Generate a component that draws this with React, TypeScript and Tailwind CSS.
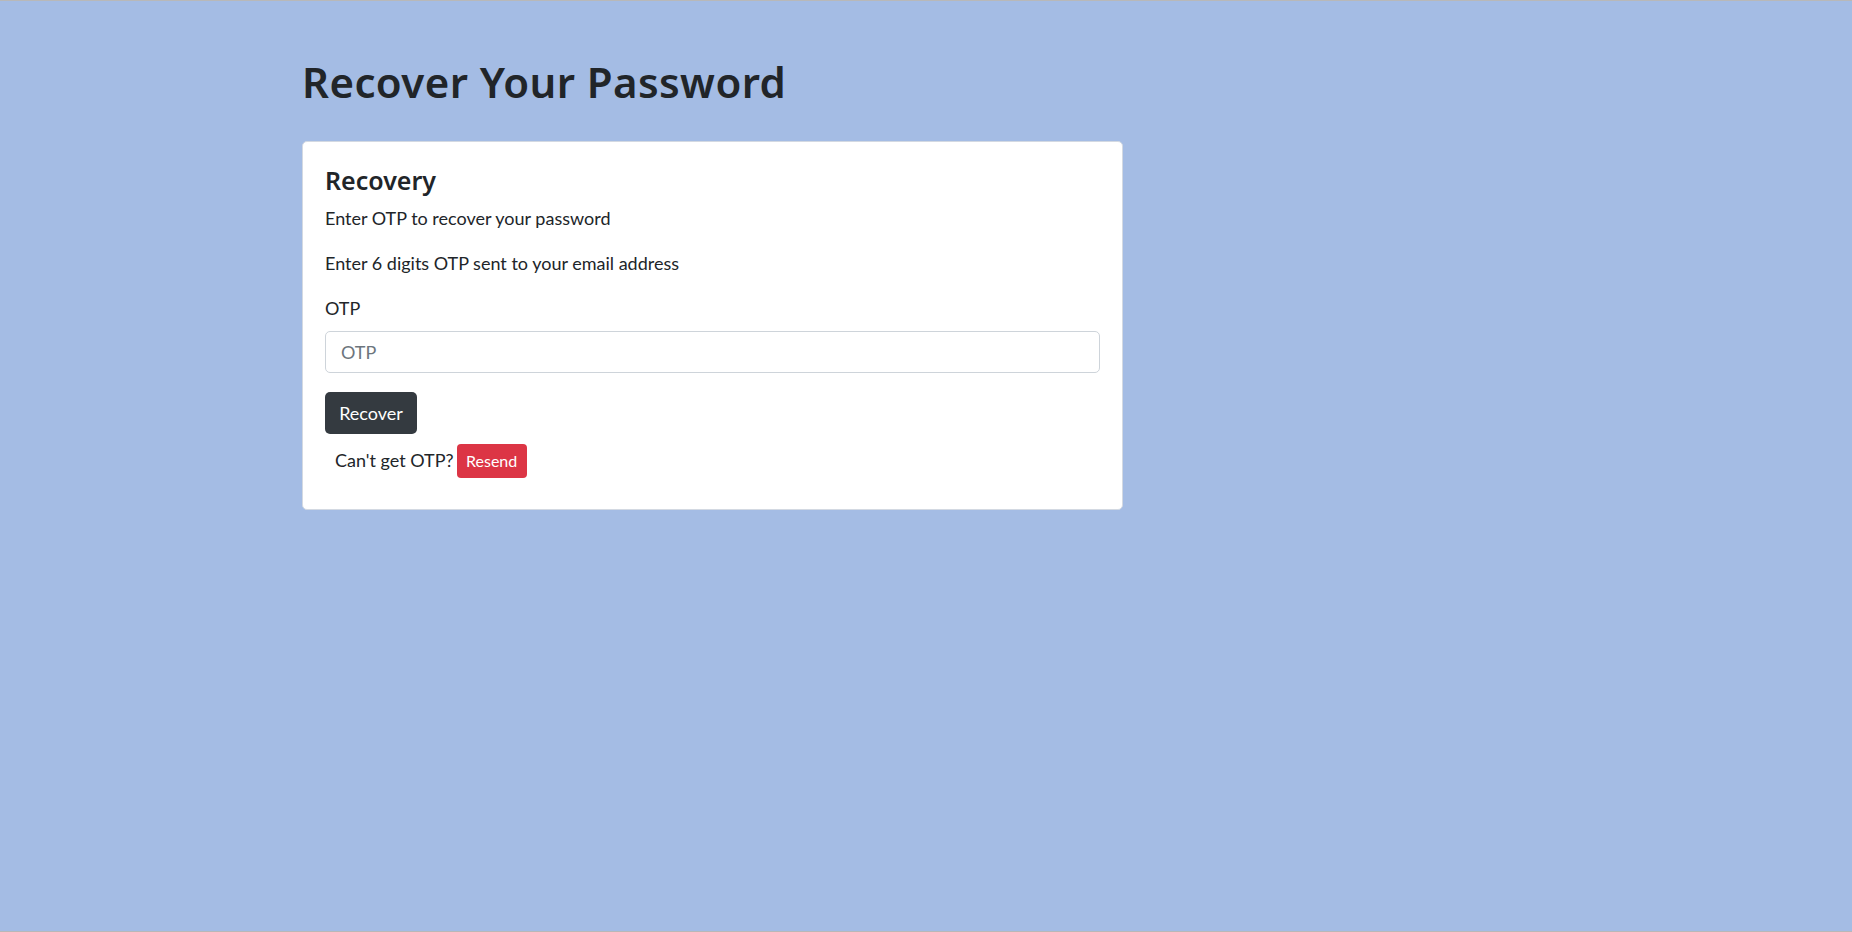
const bodyFont = { fontFamily: "Lato, 'Liberation Sans', sans-serif" };
const headFont = { fontFamily: "'Noto Sans', 'Open Sans', sans-serif" };

const App = () => {
  return (
    <div
      className="h-[932px] w-full bg-[#a4bce4] border-y border-[#b8b8b8] text-[#212529]"
      style={bodyFont}
    >
      <main className="pl-[302px]">
        <h1
          className="pt-[56px] text-[42px] leading-[50px] font-semibold tracking-[0.4px]"
          style={headFont}
        >
          Recover Your Password
        </h1>

        <section className="mt-[34px] w-[821px] bg-white border border-[#d3d9e2] rounded-[5px] px-[22px] pt-[23px] pb-[31px]">
          <h2 className="text-[25px] leading-[30px] font-semibold" style={headFont}>
            Recovery
          </h2>
          <p className="mt-[9px] text-[18px] leading-[28px]">
            Enter OTP to recover your password
          </p>
          <p className="mt-[17px] text-[18px] leading-[28px]">
            Enter 6 digits OTP sent to your email address
          </p>

          <form className="mt-[17px]" onSubmit={(e) => e.preventDefault()}>
            <label htmlFor="otp" className="block text-[18px] leading-[28px]">
              OTP
            </label>
            <input
              id="otp"
              type="text"
              placeholder="OTP"
              className="mt-[9px] block w-full h-[42px] px-[15px] text-[18px] border border-[#ced4da] rounded-[5px] placeholder:text-[#6c757d] outline-none"
              style={bodyFont}
            />
            <button
              type="submit"
              className="mt-[19px] h-[42px] w-[92px] flex items-center justify-center bg-[#343a40] text-white text-[18px] leading-[28px] rounded-[5px]"
              style={bodyFont}
            >
              Recover
            </button>
            <div className="mt-[10px] ml-[10px] flex items-baseline gap-[3px]">
              <span className="text-[18px] leading-[28px]">Can't get OTP?</span>
              <button
                type="button"
                className="w-[70px] bg-[#dc3545] text-white text-[16px] leading-[24px] py-[5px] rounded-[4px]"
                style={bodyFont}
              >
                Resend
              </button>
            </div>
          </form>
        </section>
      </main>
    </div>
  );
};

export default App;
